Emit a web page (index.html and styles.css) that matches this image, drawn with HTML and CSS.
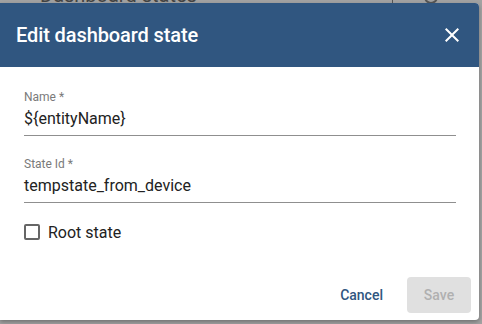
FILE: index.html
```html
<!DOCTYPE html>
<html lang="en">
<head>
	<meta charset="UTF-8">
	<title>Edit dashboard state</title>
	<link rel="stylesheet" href="styles.css">
</head>
<body>
	<div class="page">
		<div class="page-title">Dashboard states</div>
		<div class="page-sep"></div>
		<div class="page-icon"></div>
	</div>
	<div class="dialog">
		<div class="dialog-head">
			<h2 class="dialog-title">Edit dashboard state</h2>
			<button class="close-btn">
				<svg width="24" height="24" viewBox="0 0 24 24"><path d="M19 6.41L17.59 5 12 10.59 6.41 5 5 6.41 10.59 12 5 17.59 6.41 19 12 13.41 17.59 19 19 17.59 13.41 12z" fill="#fff"/></svg>
			</button>
		</div>
		<div class="dialog-body">
			<div class="field">
				<div class="field-label">Name *</div>
				<div class="field-value">${entityName}</div>
			</div>
			<div class="field">
				<div class="field-label">State Id *</div>
				<div class="field-value">tempstate_from_device</div>
			</div>
			<label class="check">
				<span class="check-box"></span>
				<span class="check-text">Root state</span>
			</label>
		</div>
		<div class="dialog-actions">
			<button class="btn btn-cancel">Cancel</button>
			<button class="btn btn-save">Save</button>
		</div>
	</div>
</body>
</html>
```
FILE: styles.css
```css
* {
	margin: 0;
	padding: 0;
	box-sizing: border-box;
}
body {
	width: 482px;
	height: 324px;
	background-color: #a2a2a2;
	font-family: Roboto, "Noto Sans", sans-serif;
	position: relative;
	overflow: hidden;
}
.page {
	height: 3px;
	position: relative;
}
.page-title {
	position: absolute;
	left: 40px;
	top: -17px;
	font-size: 20px;
	line-height: 24px;
	color: #444;
}
.page-sep {
	position: absolute;
	left: 392px;
	top: -10px;
	width: 1px;
	height: 14px;
	background-color: #555;
}
.page-icon {
	position: absolute;
	left: 424px;
	top: -10px;
	width: 14px;
	height: 14px;
	border: 2px solid #555;
	border-radius: 50%;
}
.dialog {
	position: absolute;
	top: 3px;
	left: 0;
	width: 479px;
	height: 317px;
	background-color: #fff;
	border-radius: 0 4px 4px 0;
	box-shadow: 0 2px 4px rgba(0,0,0,0.3);
	overflow: hidden;
	display: flex;
	flex-direction: column;
}
.dialog-head {
	height: 64px;
	background-color: #305680;
	display: flex;
	align-items: center;
	padding: 0 15px 0 16px;
}
.dialog-title {
	flex: 1;
	font-size: 20px;
	font-weight: 500;
	color: #fff;
	letter-spacing: -0.1px;
}
.close-btn {
	width: 24px;
	height: 24px;
	border: none;
	background: none;
	display: flex;
}
.dialog-body {
	padding: 23px 23px 0 24px;
}
.field {
	border-bottom: 1px solid #8f8f8f;
	margin-bottom: 21px;
}
.field-label {
	font-size: 12px;
	line-height: 14px;
	color: #7a7a7a;
}
.field-value {
	font-size: 16px;
	line-height: 20px;
	color: #222;
	margin-top: 5px;
	padding-bottom: 6px;
}
.check {
	display: flex;
	align-items: center;
	height: 20px;
	margin-top: -2px;
}
.check-box {
	width: 16px;
	height: 16px;
	border: 2px solid #666;
	border-radius: 2px;
	margin-right: 8px;
}
.check-text {
	font-size: 16px;
	color: #222;
}
.dialog-actions {
	margin-top: auto;
	display: flex;
	justify-content: flex-end;
	align-items: center;
	gap: 8px;
	padding: 0 8px 7px 0;
}
.btn {
	height: 36px;
	border: none;
	border-radius: 4px;
	font-family: Roboto, "Noto Sans", sans-serif;
	font-size: 14px;
	font-weight: 500;
	padding: 0 16px;
	background: none;
}
.btn-cancel {
	color: #305680;
}
.btn-save {
	width: 64px;
	background-color: #e0e0e0;
	color: #b0b0b0;
}
```
